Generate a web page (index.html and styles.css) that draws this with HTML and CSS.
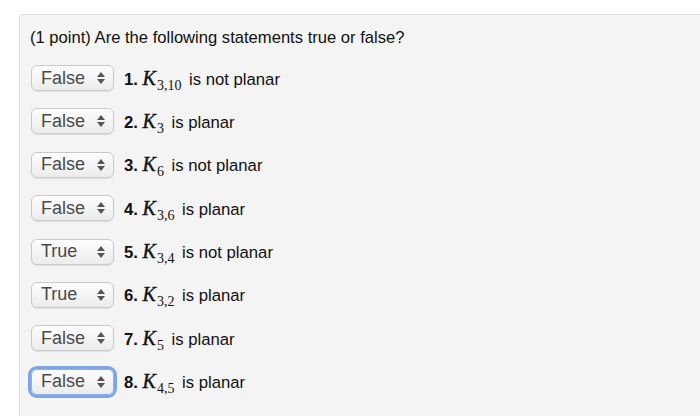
FILE: index.html
```html
<!DOCTYPE html>
<html>
<head>
<meta charset="utf-8">
<link rel="stylesheet" href="styles.css">
</head>
<body>
<div class="panel">
  <p class="question">(1 point) Are the following statements true or false?</p>
  <div class="rows">
    <div class="row"><div class="sel"><span class="val">False</span><span class="arr"><i class="up"></i><i class="dn"></i></span></div><span class="lbl"><b>1.</b> <span class="math"><span class="mi">K</span><sub>3,10</sub></span> is not planar</span></div>
    <div class="row"><div class="sel"><span class="val">False</span><span class="arr"><i class="up"></i><i class="dn"></i></span></div><span class="lbl"><b>2.</b> <span class="math"><span class="mi">K</span><sub>3</sub></span> is planar</span></div>
    <div class="row"><div class="sel"><span class="val">False</span><span class="arr"><i class="up"></i><i class="dn"></i></span></div><span class="lbl"><b>3.</b> <span class="math"><span class="mi">K</span><sub>6</sub></span> is not planar</span></div>
    <div class="row"><div class="sel"><span class="val">False</span><span class="arr"><i class="up"></i><i class="dn"></i></span></div><span class="lbl"><b>4.</b> <span class="math"><span class="mi">K</span><sub>3,6</sub></span> is planar</span></div>
    <div class="row"><div class="sel"><span class="val">True</span><span class="arr"><i class="up"></i><i class="dn"></i></span></div><span class="lbl"><b>5.</b> <span class="math"><span class="mi">K</span><sub>3,4</sub></span> is not planar</span></div>
    <div class="row"><div class="sel"><span class="val">True</span><span class="arr"><i class="up"></i><i class="dn"></i></span></div><span class="lbl"><b>6.</b> <span class="math"><span class="mi">K</span><sub>3,2</sub></span> is planar</span></div>
    <div class="row"><div class="sel"><span class="val">False</span><span class="arr"><i class="up"></i><i class="dn"></i></span></div><span class="lbl"><b>7.</b> <span class="math"><span class="mi">K</span><sub>5</sub></span> is planar</span></div>
    <div class="row"><div class="sel focus"><span class="val">False</span><span class="arr"><i class="up"></i><i class="dn"></i></span></div><span class="lbl"><b>8.</b> <span class="math"><span class="mi">K</span><sub>4,5</sub></span> is planar</span></div>
  </div>
</div>
</body>
</html>
```
FILE: styles.css
```css
html, body {
  margin: 0;
  padding: 0;
  background: #ffffff;
  font-family: "Liberation Sans", Arial, sans-serif;
  color: #1a1a1a;
  overflow: hidden;
}
.panel {
  margin: 14px 0 0 19px;
  height: 420px;
  background: #f4f4f4;
  border: 1px solid #dddddd;
  border-right: none;
  border-radius: 4px 0 0 0;
  padding: 11px 0 0 10px;
  box-sizing: border-box;
}
.question {
  margin: 0;
  font-size: 16.6px;
  line-height: 24px;
  color: #111;
}
.rows {
  margin-top: 15px;
  display: flex;
  flex-direction: column;
  gap: 17.4px;
}
.row {
  display: flex;
  align-items: center;
  height: 26px;
}
.sel {
  position: relative;
  width: 83px;
  height: 26px;
  box-sizing: border-box;
  margin-left: 1px;
  border: 1px solid #c9c9c9;
  border-radius: 6px;
  background: linear-gradient(#fdfdfd, #ececec);
  box-shadow: 0 1px 1px rgba(0,0,0,0.08);
  display: flex;
  align-items: center;
  padding-left: 9px;
}
.sel.focus {
  box-shadow: 0 0 0 3px #7ea6e6;
  border-color: #8fb0e6;
}
.val {
  font-size: 18px;
  color: #4a4a4a;
  flex: 1;
}
.arr {
  display: flex;
  flex-direction: column;
  gap: 2px;
  margin-right: 8px;
}
.arr i {
  display: block;
  width: 0;
  height: 0;
  border-left: 4px solid transparent;
  border-right: 4px solid transparent;
}
.arr .up { border-bottom: 5px solid #555; }
.arr .dn { border-top: 5px solid #555; }
.lbl {
  margin-left: 10px;
  font-size: 16.7px;
  color: #111;
  white-space: nowrap;
}
.lbl b {
  font-weight: bold;
}
.math {
  font-family: "Liberation Serif", "Times New Roman", serif;
  margin-right: 3px;
}
.mi {
  font-style: italic;
  font-size: 20px;
  -webkit-text-stroke: 0.4px #111;
  margin-right: 1px;
}
.math sub {
  font-size: 14px;
  vertical-align: -5px;
  line-height: 0;
}
```
